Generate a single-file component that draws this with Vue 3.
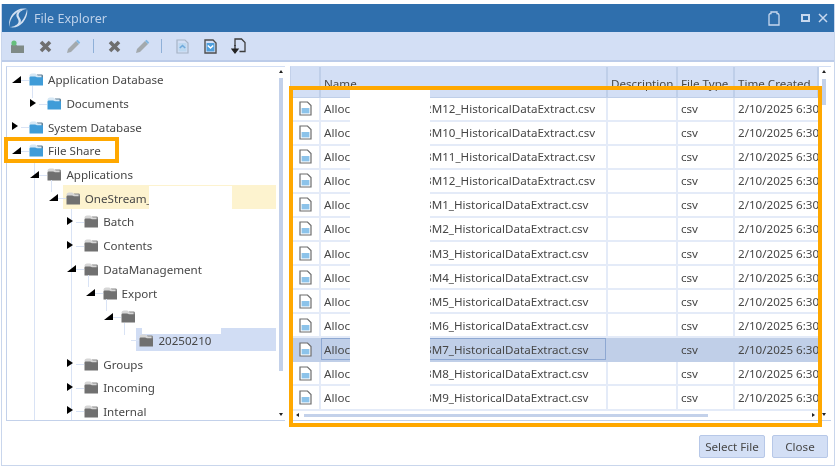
<script setup>
const treeRows = [
  { id: 1, label: 'Application Database', depth: 0, arrow: 'open', kind: 'blue' },
  { id: 2, label: 'Documents', depth: 1, arrow: 'closed', kind: 'blue', elbow: true },
  { id: 3, label: 'System Database', depth: 0, arrow: 'closed', kind: 'blue' },
  { id: 4, label: 'File Share', depth: 0, arrow: 'open', kind: 'blue' },
  { id: 5, label: 'Applications', depth: 1, arrow: 'open', kind: 'grey' },
  { id: 6, label: 'OneStream_', depth: 2, arrow: 'open', kind: 'grey', state: 'hover', elbow: true },
  { id: 7, label: 'Batch', depth: 3, arrow: 'closed', kind: 'grey' },
  { id: 8, label: 'Contents', depth: 3, arrow: 'closed', kind: 'grey' },
  { id: 9, label: 'DataManagement', depth: 3, arrow: 'open', kind: 'grey' },
  { id: 10, label: 'Export', depth: 4, arrow: 'open', kind: 'grey', elbow: true },
  { id: 11, label: '', depth: 5, arrow: 'open', kind: 'grey', elbow: true },
  { id: 12, label: '20250210', depth: 6, arrow: '', kind: 'grey', state: 'selected', elbow: true },
  { id: 13, label: 'Groups', depth: 3, arrow: 'closed', kind: 'grey' },
  { id: 14, label: 'Incoming', depth: 3, arrow: 'closed', kind: 'grey' },
  { id: 15, label: 'Internal', depth: 3, arrow: 'closed', kind: 'grey' },
]

const suffixes = ['2M12', '3M10', '3M11', '3M12', '3M1', '3M2', '3M3', '3M4', '3M5', '3M6', '3M7', '3M8', '3M9']
const files = suffixes.map((s) => ({ id: s, name: s + '_HistoricalDataExtract.csv', selected: s === '3M7' }))

const indent = (depth) => ({ paddingLeft: 5 + depth * 18.4 + 'px' })
const bgLeft = (depth) => ({ left: 5 + depth * 18.4 + 14 + 'px' })
</script>

<template>
  <div class="window">
    <svg class="defs" width="0" height="0">
      <symbol id="folder" viewBox="0 0 14 13">
        <path class="f-cap" d="M8 1.4 H12.5 C13.4 1.4 14 2 14 2.8 V6 H8 Z" />
        <path class="f-tab" d="M0.5 3 C0.5 1.4 1.4 0.5 3 0.5 H6 C7.2 0.5 7.6 2 9 2.6 H12.5 V6 H0.5 Z" />
        <path class="f-body" d="M0.5 5 C0.5 4.2 1 3.6 2 3.6 H5.5 C6.5 3.6 7 4.3 8 4.3 H14 V12.5 H0.5 Z" />
      </symbol>
      <symbol id="file" viewBox="0 0 13 15">
        <path d="M1 1 H8.5 L12 4.5 V14 H1 Z" fill="#fff" stroke="#6d6d6d" stroke-width="1.2" />
        <rect x="2.6" y="7" width="7.8" height="5.4" fill="#8cc3ea" />
      </symbol>
    </svg>

    <header class="titlebar">
      <svg class="logo" width="20" height="20" viewBox="0 0 20 20" fill="#d3e0f1">
        <path d="M19 1 C14 -0.5 8 1.5 4.5 6 C1.5 10 0.3 15 1.5 19 C1.2 15 3 10.5 6 7 C9.5 3 14.5 1.2 19 1 Z" />
        <path d="M19 1 C20 5 18.5 10.5 15 14.5 C11.5 18.5 6 20.5 1.5 19 C6 19 10.5 17 13.5 13.5 C16.8 9.8 18.5 5 19 1 Z" />
        <path d="M17 1.6 C12 1.4 8.6 3.8 8.4 7 C8.2 10 11.4 11.4 10.4 14.4 C9.7 16.6 6.8 18.2 3.4 18.6 C7.8 19 12 17.4 12.8 14 C13.6 10.6 10.4 9.6 10.6 6.8 C10.8 4.2 13.4 2.4 17 1.6 Z" />
      </svg>
      <span class="title">File Explorer</span>
      <svg class="pin" width="12" height="15" viewBox="0 0 12 15" fill="none" stroke="#c7d8ee" stroke-width="1.3">
        <path d="M1 4 C1 3 2 2.5 3 2.5 V1 H9 V2.5 C10 2.5 11 3 11 4 V14 H1 Z" />
      </svg>
      <span class="win-box"></span>
      <svg class="win-x" width="10" height="10" viewBox="0 0 10 10" stroke="#c7d8ee" stroke-width="1.5">
        <path d="M1 1 L9 9 M9 1 L1 9" />
      </svg>
    </header>

    <div class="toolbar">
      <button class="tool">
        <svg width="15" height="15" viewBox="0 0 15 15">
          <path d="M1 7 C1 6 1.6 5.5 2.5 5.5 H6 L7 6.5 H14 V14 H1 Z" fill="#7f8a86" />
          <circle cx="4" cy="4" r="2.6" fill="#66bf7c" />
        </svg>
      </button>
      <button class="tool">
        <svg width="13" height="13" viewBox="0 0 13 13" stroke="#6f6f6f" stroke-width="3.6"><path d="M2 2 L11 11 M11 2 L2 11" /></svg>
      </button>
      <button class="tool">
        <svg width="15" height="15" viewBox="0 0 15 15">
          <path d="M1 14 L2 10 L10 2 L13 5 L5 13 Z" fill="#a3a9ad" />
          <path d="M10 2 L11.5 0.8 L14.2 3.5 L13 5 Z" fill="#7fb6e0" />
        </svg>
      </button>
      <span class="sep"></span>
      <button class="tool">
        <svg width="13" height="13" viewBox="0 0 13 13" stroke="#6f6f6f" stroke-width="3.6"><path d="M2 2 L11 11 M11 2 L2 11" /></svg>
      </button>
      <button class="tool">
        <svg width="15" height="15" viewBox="0 0 15 15">
          <path d="M1 14 L2 10 L10 2 L13 5 L5 13 Z" fill="#a3a9ad" />
          <path d="M10 2 L11.5 0.8 L14.2 3.5 L13 5 Z" fill="#7fb6e0" />
        </svg>
      </button>
      <span class="sep sep-b"></span>
      <button class="tool">
        <svg width="13" height="15" viewBox="0 0 13 15" fill="none">
          <path d="M1 1 H9 L12 4 V14 H1 Z" stroke="#a6b4c6" stroke-width="1.2" />
          <rect x="2.6" y="4" width="7.8" height="8.4" fill="#bcd8f0" />
          <path d="M3.8 9 L6.5 6.5 L9.2 9" stroke="#6fa9dc" stroke-width="1.6" />
        </svg>
      </button>
      <button class="tool">
        <svg width="13" height="15" viewBox="0 0 13 15" fill="none">
          <path d="M1 1 H9 L12 4 V14 H1 Z" stroke="#4e4e4e" stroke-width="1.4" />
          <rect x="2.6" y="4" width="7.8" height="8.4" fill="#4f9fdc" />
          <path d="M3.8 6.5 L6.5 9 L9.2 6.5" stroke="#fff" stroke-width="1.6" />
        </svg>
      </button>
      <button class="tool">
        <svg width="15" height="16" viewBox="0 0 15 16" fill="none">
          <path d="M4 8 V1 H10.5 L14 4.5 V13.5 H8.5" stroke="#3d3d3d" stroke-width="1.3" />
          <path d="M4 7 V12 M1 11 H7 L4 15 Z" stroke="#222" fill="#222" stroke-width="1.2" />
        </svg>
      </button>
    </div>

    <div class="panes">
      <aside class="tree">
        <span class="guide guide-a"></span>
        <span class="guide guide-b"></span>
        <div v-for="row in treeRows" :key="row.id" class="tree-row" :style="indent(row.depth)">
          <span v-if="row.state" class="row-bg" :class="row.state" :style="bgLeft(row.depth)"></span>
          <span v-if="row.elbow" class="elbow"></span>
          <span class="arrow" :class="row.arrow"></span>
          <svg class="folder" :class="row.kind" width="14" height="13"><use href="#folder" /></svg>
          <span class="tree-label">{{ row.label }}</span>
        </div>
        <div class="vscroll tree-scroll">
          <i class="up"></i><b></b><i class="down"></i>
        </div>
      </aside>

      <section class="grid">
        <div class="grid-head">
          <div class="cell c-icon"></div>
          <div class="cell c-name">Name</div>
          <div class="cell c-desc">Description</div>
          <div class="cell c-type">File Type</div>
          <div class="cell c-time">Time Created</div>
        </div>
        <div v-for="f in files" :key="f.id" class="grid-row" :class="{ selected: f.selected }">
          <div class="cell c-icon"><svg width="13" height="15"><use href="#file" /></svg></div>
          <div class="cell c-name">
            <span class="name-start">Alloc</span><span>{{ f.name }}</span>
          </div>
          <div class="cell c-desc"></div>
          <div class="cell c-type">csv</div>
          <div class="cell c-time">2/10/2025 6:30</div>
        </div>
        <div class="hscroll">
          <i class="left"></i><b></b><i class="right"></i>
        </div>
        <div class="vscroll grid-scroll">
          <i class="up"></i><b></b><i class="down"></i>
        </div>
      </section>
    </div>

    <footer class="footer">
      <button class="btn">Select File</button>
      <button class="btn btn-close">Close</button>
    </footer>

    <!-- redacted parts and the annotation boxes lie over the window -->
    <span class="mask mask-files"></span>
    <span class="mask mask-one"></span>
    <span class="mask mask-export"></span>
    <span class="mark mark-share"></span>
    <span class="mark mark-files"></span>
  </div>
</template>

<style>
html, body {
  margin: 0;
  background: #fff;
}
</style>

<style scoped>
.window {
  position: relative;
  box-sizing: border-box;
  width: 834px;
  height: 462px;
  margin: 4px 0 0 1px;
  display: flex;
  flex-direction: column;
  border: 1px solid #c9d6ec;
  border-top: 0;
  background: #fff;
  font-family: "Noto Sans", sans-serif;
  font-size: 11.6px;
  color: #474747;
  filter: blur(0.3px);
}

.defs {
  position: absolute;
}

.titlebar {
  flex: 0 0 28px;
  display: flex;
  align-items: center;
  background: #2f6fad;
  color: #bdd1ea;
}

.logo {
  margin-left: 6px;
}

.title {
  margin-left: 6px;
  font-size: 12.6px;
}

.pin {
  margin-left: auto;
}

.win-box {
  box-sizing: border-box;
  width: 9px;
  height: 8px;
  margin-left: 21px;
  border: 2px solid #c7d8ee;
}

.win-x {
  margin: 0 6px 0 8px;
}

.toolbar {
  flex: 0 0 30px;
  display: flex;
  align-items: center;
  padding-left: 1px;
  background: #d3dff5;
  border-bottom: 2px solid #bccce9;
  box-sizing: border-box;
}

.tool {
  width: 28px;
  height: 24px;
  padding: 0;
  border: 0;
  background: none;
  display: flex;
  align-items: center;
  justify-content: center;
}

.sep {
  width: 1px;
  height: 14px;
  margin: 0 6px;
  background: #8fb0d8;
}

.sep-b {
  margin: 0 6px 0 5px;
}

.panes {
  flex: 0 0 358px;
  display: flex;
  margin: 4px 3px 0 4px;
  gap: 5px;
}

.tree {
  position: relative;
  box-sizing: border-box;
  width: 279px;
  height: 355px;
  padding-top: 1px;
  border: 1px solid #c3d1ea;
  border-top: 1px solid #d3dff5;
  border-right: 0;
  overflow: hidden;
}

.guide {
  position: absolute;
  top: 96px;
  bottom: 0;
  width: 1px;
  background: #d9e3f5;
}

.guide-a {
  left: 27px;
}

.guide-b {
  left: 64px;
  top: 142px;
}

.tree-row {
  position: relative;
  box-sizing: border-box;
  height: 23.7px;
  display: flex;
  align-items: center;
  white-space: nowrap;
}

.row-bg {
  position: absolute;
  top: -1px;
  right: 9px;
  bottom: 1px;
}

.row-bg.hover {
  background: #fdf3cf;
}

.row-bg.selected {
  background: #d1ddf4;
}

.elbow {
  position: absolute;
  top: -6px;
  height: 12px;
  margin-left: 2px;
  width: 6px;
  border-left: 1px solid #d9e3f5;
}

.arrow {
  position: relative;
  width: 8px;
  height: 10px;
  flex: 0 0 8px;
}

.arrow::after {
  content: "";
  position: absolute;
  left: 9px;
  top: 5px;
  width: 8px;
  height: 1px;
  background: #d9e3f5;
}

.arrow.closed::before {
  content: "";
  position: absolute;
  left: 0;
  top: 0;
  border-left: 6px solid #000;
  border-top: 4.5px solid transparent;
  border-bottom: 4.5px solid transparent;
}

.arrow.open::before {
  content: "";
  position: absolute;
  left: 0;
  top: 1px;
  border-right: 9px solid #000;
  border-top: 7px solid transparent;
}

.folder {
  position: relative;
  margin-left: 9px;
  flex: 0 0 14px;
}

.folder.blue {
  --tab: #d6e8f5;
  --body: #3f9cd8;
  --cap: #5f7f96;
}

.folder.grey {
  --tab: #d6d6d6;
  --body: #707070;
  --cap: #8a8a8a;
}

.f-cap {
  fill: var(--cap);
}

.f-tab {
  fill: var(--tab);
}

.f-body {
  fill: var(--body);
}

.tree-label {
  position: relative;
  margin-left: 5px;
}

.vscroll {
  position: absolute;
  top: 0;
  bottom: 0;
  width: 6px;
}

.vscroll b {
  position: absolute;
  left: 0;
  width: 4px;
  background: #c3d1ea;
}

.vscroll i {
  position: absolute;
  left: 0;
  border-left: 2.5px solid transparent;
  border-right: 2.5px solid transparent;
}

.vscroll .up {
  top: 3px;
  border-bottom: 3px solid #222;
}

.vscroll .down {
  bottom: 4px;
  border-top: 3px solid #222;
}

.tree-scroll {
  right: 0;
}

.tree-scroll b {
  top: 11px;
  height: 293px;
}

.grid {
  position: relative;
  box-sizing: border-box;
  flex: 1;
  height: 355px;
  border: 1px solid #c3d1ea;
  border-top: 1px solid #d3dff5;
  border-right: 0;
  padding-right: 12px;
  overflow: hidden;
  font-size: 11.6px;
}

.grid-head,
.grid-row {
  display: flex;
  overflow: hidden;
}

.grid-head {
  height: 30.5px;
  background: #d3dff5;
  border-bottom: 1px solid #bfcfe9;
  box-sizing: border-box;
}

.grid-head .cell {
  border-right: 2px solid #bfcfe9;
  align-items: flex-end;
  padding-bottom: 6px;
}

.grid-row {
  height: 24.08px;
  box-sizing: border-box;
  border-bottom: 2px solid #e4ebf8;
}

.grid-row.selected {
  background: #c0cfe8;
  border-bottom-color: #c0cfe8;
}

.grid-row.selected .cell {
  border-right-color: #c0cfe8;
}

.grid-row.selected .c-name {
  box-shadow: inset 0 0 0 1px #8ea8d2;
}

.cell {
  box-sizing: border-box;
  display: flex;
  align-items: center;
  padding-left: 3px;
  border-right: 2px solid #e4ebf8;
  white-space: nowrap;
  overflow: hidden;
}

.c-icon {
  flex: 0 0 30px;
  padding-left: 8px;
}

.c-name {
  flex: 0 0 287px;
}

.c-desc {
  flex: 0 0 70px;
}

.c-type {
  flex: 0 0 57px;
}

.c-time {
  flex: 1;
  border-right: 0;
}

.name-start {
  width: 101px;
  flex: 0 0 101px;
}

.hscroll {
  position: relative;
  height: 10px;
}

.hscroll b {
  position: absolute;
  left: 13px;
  top: 3px;
  width: 404px;
  height: 3px;
  background: #c3d1ea;
}

.hscroll i {
  position: absolute;
  top: 2px;
  border-top: 2.5px solid transparent;
  border-bottom: 2.5px solid transparent;
}

.hscroll .left {
  left: 5px;
  border-right: 3px solid #222;
}

.hscroll .right {
  left: 521px;
  border-left: 3px solid #222;
}

.grid-scroll {
  right: 3px;
}

.grid-scroll b {
  top: 12px;
  height: 26px;
}

.footer {
  display: flex;
  justify-content: flex-end;
  gap: 7px;
  padding: 11px 6px 0 0;
}

.btn {
  box-sizing: border-box;
  height: 23px;
  padding: 0;
  width: 66px;
  border: 1px solid #b7c8e8;
  border-radius: 2px;
  background: #d3dff5;
  font: inherit;
  color: #474747;
}

.btn-close {
  width: 56px;
}

.mask {
  position: absolute;
  background: #fff;
}

.mask-files {
  left: 348px;
  top: 85px;
  width: 80px;
  height: 320px;
}

.mask-one {
  left: 147px;
  top: 182px;
  width: 83px;
  height: 24px;
}

.mask-export {
  left: 140px;
  top: 316px;
  width: 79px;
  height: 14px;
}

.mark {
  position: absolute;
  box-sizing: border-box;
  border: 4px solid #ffa800;
}

.mark-share {
  left: 2px;
  top: 133px;
  width: 115px;
  height: 26px;
}

.mark-files {
  left: 286.5px;
  top: 82px;
  width: 533px;
  height: 341px;
}
</style>
